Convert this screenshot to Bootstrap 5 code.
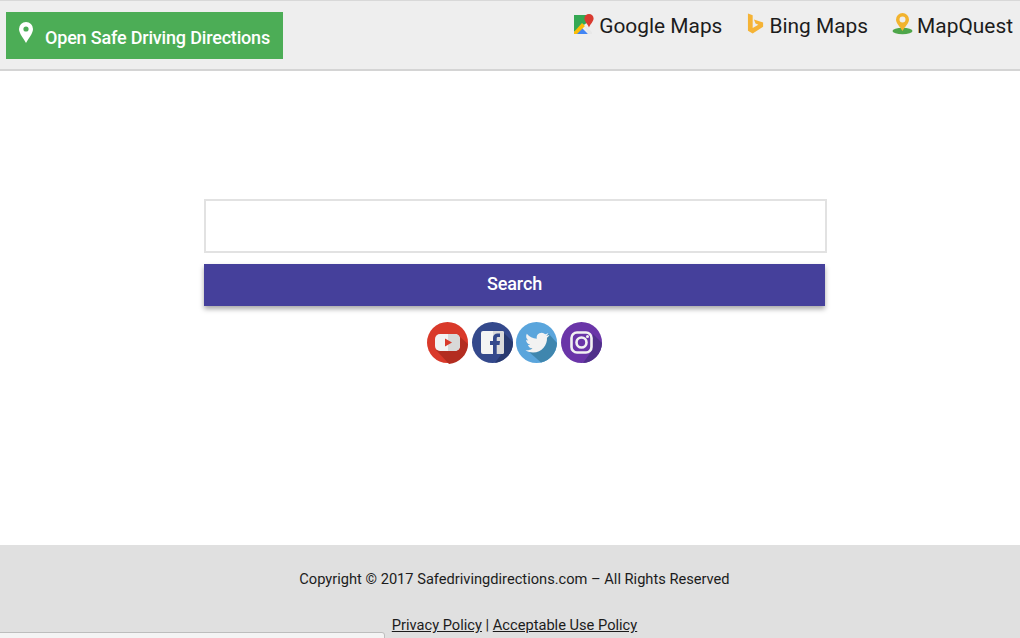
<!DOCTYPE html>
<html lang="en">
  <head>
    <meta charset="UTF-8" />
    <title>Safe Driving Directions</title>
    <link
      href="https://cdn.jsdelivr.net/npm/bootstrap@5.3.0/dist/css/bootstrap.min.css"
      rel="stylesheet"
    />
    <style>
      html, body { height: 638px; overflow: hidden; }
      body { font-family: Roboto, "Liberation Sans", sans-serif; color: #1c1c1c; position: relative; }
      .top-bar { height: 71px; background: #eee; border-top: 1px solid #d8d8d8; border-bottom: 2px solid #d4d4d4; padding: 11px 7px 0 6px; }
      .open-btn { width: 277px; height: 47px; background: #4cad56; color: #fff; font-size: 18px; font-weight: 500; border-radius: 0; border: 0; padding: 3px 0 0 13px; letter-spacing: -0.18px; }
      .open-btn:hover { background: #4cad56; color: #fff; }
      .open-btn svg { margin-right: 12px; margin-top: -10px; }
      .map-link { color: #1c1c1c; font-size: 20.9px; text-decoration: none; line-height: 28px; }
      .map-link svg { margin-right: 4px; margin-top: -6px; }
      .map-link + .map-link { margin-left: 25px; }
      .map-link:last-child { margin-left: 24px; }
      .search-area { width: 623px; margin-left: 204px; padding-top: 128px; }
      .search-input { height: 54px; border: 2px solid #e2e2e2; border-radius: 0; }
      .search-btn { width: 621px; height: 42px; margin-top: 11px; padding: 0 0 4px; background: #45409b; color: #fff; font-size: 18px; font-weight: 500; letter-spacing: -0.1px; border: 0; border-radius: 0; box-shadow: 0 3px 5px rgba(0,0,0,.35); display: block; }
      .search-btn:hover { background: #45409b; color: #fff; }
      .social-row { gap: 3.6px; margin-top: 15px; padding-left: 223px; }
      .page-foot { height: 93px; background: #e0e0e0; font-size: 14.65px; color: #1c1c1c; padding: 24px 0 0 9px; }
      .page-foot p { margin: 0 0 26px; line-height: 20px; }
      .page-foot a { color: #1c1c1c; }
      .status-tip { position: absolute; left: -1px; bottom: -8px; width: 386px; height: 14px; background: #f4f4f4; border: 1px solid #bdbdbd; border-radius: 0 3px 0 0; }
    </style>
  </head>
  <body class="d-flex flex-column">
    <header class="top-bar d-flex justify-content-between align-items-start">
      <a href="#" class="btn open-btn d-flex align-items-center">
        <svg width="14" height="21" viewBox="0 0 14 21"><path fill="#fff" fill-rule="evenodd" d="M7 0a7 7 0 0 1 7 7c0 4.600-5 10-7 14C5 17 0 11.600 0 7a7 7 0 0 1 7-7zm0 4.400a2.600 2.600 0 1 0 0 5.200 2.600 2.600 0 0 0 0-5.200z"/></svg>
        Open Safe Driving Directions
      </a>
      <nav class="d-flex">
        <a href="#" class="map-link">
          <svg width="22" height="22" viewBox="0 0 22 22">
            <path fill="#35a853" d="M1 2h14v7L1 19z"/>
            <path fill="#4285f4" d="M1 21l7-7 7 7z"/>
            <path fill="#fbbc05" d="M1 19l8-9 3 3-8 8H1z"/>
            <path fill="#e8e8e8" d="M9 10l3 3 3 8h4v-2z"/>
            <path fill="#d93b30" d="M16 1a4.600 4.600 0 0 1 4.600 4.600c0 3-3 5-4.600 9-1.600-4-4.600-6-4.600-9A4.600 4.600 0 0 1 16 1z"/>
          </svg>Google Maps
        </a>
        <a href="#" class="map-link">
          <svg width="18" height="22" viewBox="0 0 19 22"><path fill="#f5b335" d="M1 0l5 1.700v13.500l6-3.400-3-1.300-1.700-4.200L17 9.500v4.500L6 21l-5-3z"/></svg>Bing Maps
        </a>
        <a href="#" class="map-link">
          <svg width="21" height="22" viewBox="0 0 21 22">
            <ellipse cx="10.500" cy="18" rx="10" ry="3.300" fill="#4ea64a"/>
            <path fill="#f2b32e" fill-rule="evenodd" d="M10.500 0a6.500 6.500 0 0 1 6.500 6.500c0 4-4 7-6.500 11.500C8 13.500 4 10.500 4 6.500A6.500 6.500 0 0 1 10.500 0zm0 3.500a3 3 0 1 0 0 6 3 3 0 0 0 0-6z"/>
          </svg>MapQuest
        </a>
      </nav>
    </header>

    <main class="flex-grow-1">
      <form class="search-area" onsubmit="return false">
        <input type="text" class="form-control search-input" />
        <button type="submit" class="btn search-btn">Search</button>
        <div class="social-row d-flex">
          <a href="#" aria-label="YouTube">
            <svg width="41" height="43" viewBox="0 0 41 43">
              <circle cx="20.500" cy="21.500" r="20.500" fill="#d9392a"/>
              <path fill="#b32d20" d="M9 29l13 13.900A20.500 20.500 0 0 0 41 23l-9-8z"/>
              <rect x="8" y="13" width="25" height="17" rx="5" fill="#f2f2f2"/>
              <path fill="#d8d8d8" d="M21 13h7a5 5 0 0 1 5 5v7a5 5 0 0 1-5 5h-7z"/>
              <path fill="#d9392a" d="M18 17.500l7 4-7 4z"/>
            </svg>
          </a>
          <a href="#" aria-label="Facebook">
            <svg width="41" height="43" viewBox="0 0 41 43">
              <circle cx="20.500" cy="21.500" r="20.500" fill="#34498c"/>
              <path fill="#28396f" d="M31 31L23 41.800A20.500 20.500 0 0 0 41 21l-9-9z"/>
              <rect x="9" y="10" width="23" height="23" rx="2" fill="#f4f4f4"/>
              <path fill="#dadada" d="M21 10h9a2 2 0 0 1 2 2v19a2 2 0 0 1-2 2h-9z"/>
              <path fill="#34498c" d="M21 33V24h-3v-4h3v-3c0-3 2-4.500 4.500-4.500H28V16h-2c-1 0-1.300.5-1.300 1.500V20H28l-.5 4h-2.800v9z"/>
            </svg>
          </a>
          <a href="#" aria-label="Twitter">
            <svg width="41" height="43" viewBox="0 0 41 43">
              <circle cx="20.500" cy="21.500" r="20.500" fill="#5aa5dc"/>
              <path fill="#3f86ae" d="M12 30L25 41.500A20.500 20.500 0 0 0 41 22l-8-9z"/>
              <path fill="#f2f2f2" d="M33 14c-1 .5-2 .7-2.800.8 1-.6 1.800-1.500 2.200-2.700-1 .6-2 1-3.100 1.200a5 5 0 0 0-8.500 4.500c-4-.2-7.600-2.100-10-5-1.300 2.300-.6 5.200 1.500 6.600-.8 0-1.500-.2-2.200-.6 0 2.400 1.700 4.500 4 5-.7.2-1.500.2-2.200.1.600 2 2.500 3.400 4.600 3.400-2 1.600-4.500 2.300-7 2 2.200 1.400 4.800 2.200 7.500 2.200 9.200 0 14.400-7.800 14-14.800 1-.7 1.800-1.600 2.500-2.700z"/>
            </svg>
          </a>
          <a href="#" aria-label="Instagram">
            <svg width="41" height="43" viewBox="0 0 41 43">
              <circle cx="20.500" cy="21.500" r="20.500" fill="#6a35a8"/>
              <path fill="#50308a" d="M30 31L22 42A20.500 20.500 0 0 0 41 22l-9-9z"/>
              <rect x="10.500" y="11.500" width="20" height="20" rx="5.500" fill="none" stroke="#f2f2f2" stroke-width="2.600"/>
              <circle cx="20.500" cy="21.500" r="5" fill="none" stroke="#f2f2f2" stroke-width="2.600"/>
              <circle cx="26.500" cy="15.500" r="1.500" fill="#f2f2f2"/>
            </svg>
          </a>
        </div>
      </form>
    </main>

    <footer class="page-foot text-center">
      <p>Copyright © 2017 Safedrivingdirections.com – All Rights Reserved</p>
      <p><a href="#">Privacy Policy</a> | <a href="#">Acceptable Use Policy</a></p>
    </footer>
    <div class="status-tip"></div>
  </body>
</html>
